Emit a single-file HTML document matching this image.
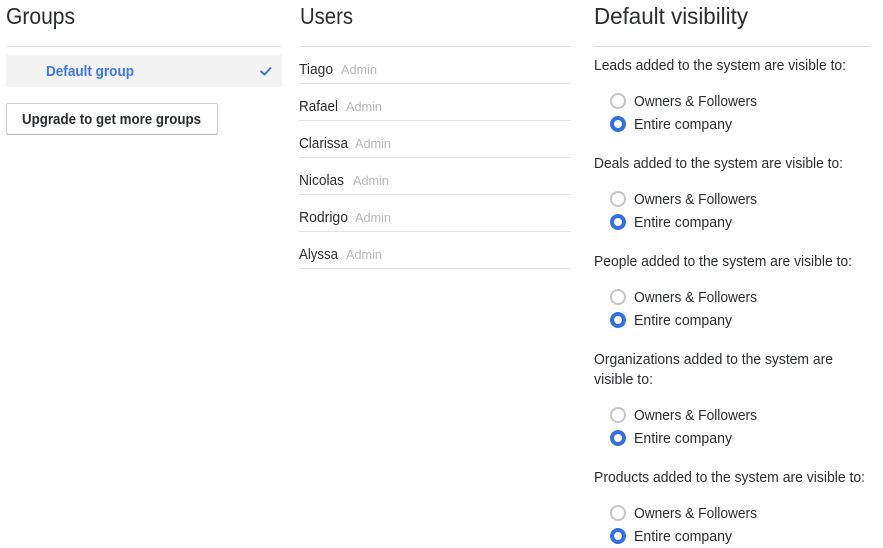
<!DOCTYPE html>
<html><head><meta charset="utf-8"><style>
html,body{margin:0;padding:0;background:#fff;width:883px;height:548px;overflow:hidden}
svg{display:block}
text{font-family:"Liberation Sans",sans-serif;fill:#2a2d30}
.h{font-size:23px}
.t{font-size:15px}
.a{font-size:13px;fill:#b5b7b9}
.b{font-weight:bold;font-size:15px}
</style></head><body>
<svg width="883" height="548" viewBox="0 0 883 548" xmlns="http://www.w3.org/2000/svg">
<defs>
<g id="off"><circle r="7" fill="#fff" stroke="#c4c5c6" stroke-width="2"/></g>
<g id="on"><circle r="6" fill="#fff" stroke="#3170e0" stroke-width="4"/></g>
</defs>
<text class="h" x="6" y="24" textLength="69" lengthAdjust="spacingAndGlyphs">Groups</text>
<rect x="6" y="46" width="276" height="1" fill="#e3e3e3"/>
<rect x="6" y="55" width="276" height="32" fill="#f4f4f5"/>
<text class="b" x="46" y="76" textLength="88" lengthAdjust="spacingAndGlyphs" style="fill:#3b78e7">Default group</text>
<path d="M260.5 71 L264.5 74.5 L271 67.5" fill="none" stroke="#3b78e7" stroke-width="2"/>
<rect x="6.5" y="103.5" width="211" height="31" rx="2" fill="#fff" stroke="#cbcccd"/>
<rect x="7" y="134" width="210" height="1" fill="#b4b5b6"/>
<text class="b" x="22" y="124" textLength="179" lengthAdjust="spacingAndGlyphs">Upgrade to get more groups</text>

<text class="h" x="300" y="24" textLength="53" lengthAdjust="spacingAndGlyphs">Users</text>
<g fill="#e3e3e3">
<rect x="299" y="46" width="272" height="1"/><rect x="299" y="83" width="272" height="1"/><rect x="299" y="120" width="272" height="1"/><rect x="299" y="157" width="272" height="1"/><rect x="299" y="194" width="272" height="1"/><rect x="299" y="231" width="272" height="1"/><rect x="299" y="268" width="272" height="1"/>
</g>
<text class="t" x="299" y="74" textLength="34" lengthAdjust="spacingAndGlyphs">Tiago</text><text class="a" x="341" y="74" textLength="36" lengthAdjust="spacingAndGlyphs">Admin</text>
<text class="t" x="299" y="111" textLength="39" lengthAdjust="spacingAndGlyphs">Rafael</text><text class="a" x="346" y="111" textLength="36" lengthAdjust="spacingAndGlyphs">Admin</text>
<text class="t" x="299" y="148" textLength="49" lengthAdjust="spacingAndGlyphs">Clarissa</text><text class="a" x="355" y="148" textLength="36" lengthAdjust="spacingAndGlyphs">Admin</text>
<text class="t" x="299" y="185" textLength="45" lengthAdjust="spacingAndGlyphs">Nicolas</text><text class="a" x="353" y="185" textLength="36" lengthAdjust="spacingAndGlyphs">Admin</text>
<text class="t" x="299" y="222" textLength="49" lengthAdjust="spacingAndGlyphs">Rodrigo</text><text class="a" x="355" y="222" textLength="36" lengthAdjust="spacingAndGlyphs">Admin</text>
<text class="t" x="299" y="259" textLength="39" lengthAdjust="spacingAndGlyphs">Alyssa</text><text class="a" x="346" y="259" textLength="36" lengthAdjust="spacingAndGlyphs">Admin</text>

<text class="h" x="594" y="24" textLength="154" lengthAdjust="spacingAndGlyphs">Default visibility</text>
<rect x="594" y="46" width="276" height="1" fill="#e3e3e3"/>

<text class="t" x="594" y="70" textLength="252" lengthAdjust="spacingAndGlyphs">Leads added to the system are visible to:</text>
<use href="#off" x="618" y="101"/><text class="t" x="634" y="106" textLength="123" lengthAdjust="spacingAndGlyphs">Owners &amp; Followers</text>
<use href="#on" x="618" y="124"/><text class="t" x="634" y="129" textLength="98" lengthAdjust="spacingAndGlyphs">Entire company</text>

<text class="t" x="594" y="168" textLength="249" lengthAdjust="spacingAndGlyphs">Deals added to the system are visible to:</text>
<use href="#off" x="618" y="199"/><text class="t" x="634" y="204" textLength="123" lengthAdjust="spacingAndGlyphs">Owners &amp; Followers</text>
<use href="#on" x="618" y="222"/><text class="t" x="634" y="227" textLength="98" lengthAdjust="spacingAndGlyphs">Entire company</text>

<text class="t" x="594" y="266" textLength="258" lengthAdjust="spacingAndGlyphs">People added to the system are visible to:</text>
<use href="#off" x="618" y="297"/><text class="t" x="634" y="302" textLength="123" lengthAdjust="spacingAndGlyphs">Owners &amp; Followers</text>
<use href="#on" x="618" y="320"/><text class="t" x="634" y="325" textLength="98" lengthAdjust="spacingAndGlyphs">Entire company</text>

<text class="t" x="594" y="364" textLength="239" lengthAdjust="spacingAndGlyphs">Organizations added to the system are</text>
<text class="t" x="594" y="384" textLength="59" lengthAdjust="spacingAndGlyphs">visible to:</text>
<use href="#off" x="618" y="415"/><text class="t" x="634" y="420" textLength="123" lengthAdjust="spacingAndGlyphs">Owners &amp; Followers</text>
<use href="#on" x="618" y="438"/><text class="t" x="634" y="443" textLength="98" lengthAdjust="spacingAndGlyphs">Entire company</text>

<text class="t" x="594" y="482" textLength="271" lengthAdjust="spacingAndGlyphs">Products added to the system are visible to:</text>
<use href="#off" x="618" y="513"/><text class="t" x="634" y="518" textLength="123" lengthAdjust="spacingAndGlyphs">Owners &amp; Followers</text>
<use href="#on" x="618" y="536"/><text class="t" x="634" y="541" textLength="98" lengthAdjust="spacingAndGlyphs">Entire company</text>
</svg>
</body></html>
